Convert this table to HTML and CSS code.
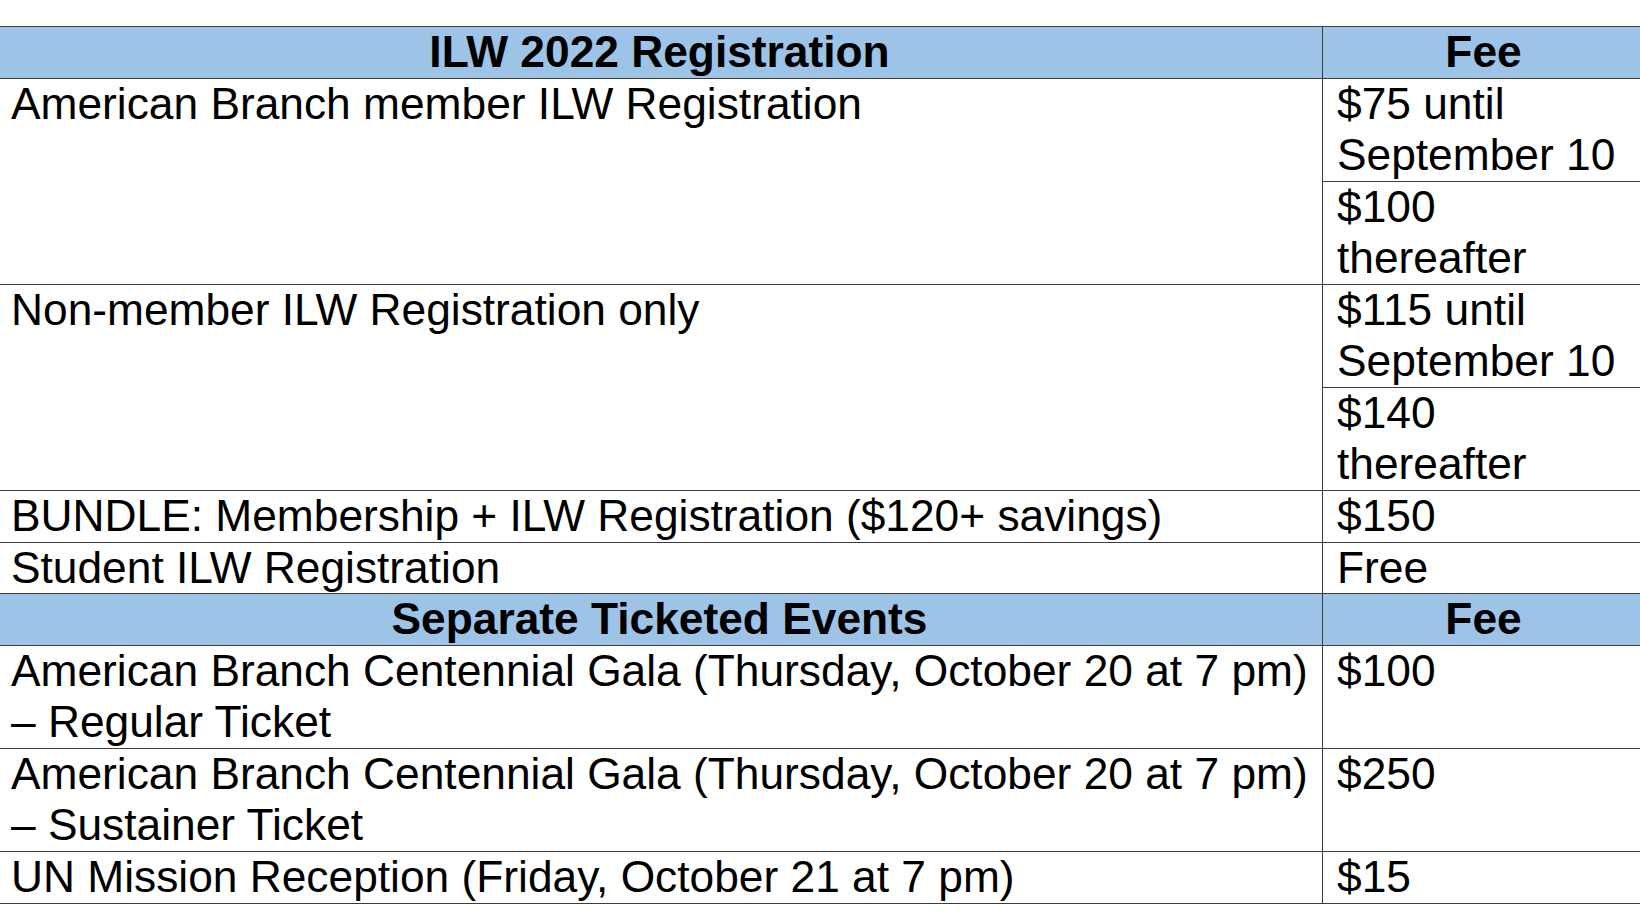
FILE: index.html
```html
<!DOCTYPE html>
<html lang="en">
<head>
<meta charset="utf-8">
<title>ILW 2022 Registration</title>
<link rel="stylesheet" href="styles.css">
</head>
<body>
<table class="fees">
  <colgroup>
    <col class="col-item">
    <col class="col-fee">
  </colgroup>
  <tr class="head">
    <th>ILW 2022 Registration</th>
    <th>Fee</th>
  </tr>
  <tr>
    <td rowspan="2">American Branch member ILW Registration</td>
    <td>$75 until September 10</td>
  </tr>
  <tr>
    <td>$100 thereafter</td>
  </tr>
  <tr>
    <td rowspan="2">Non-member ILW Registration only</td>
    <td>$115 until September 10</td>
  </tr>
  <tr>
    <td>$140 thereafter</td>
  </tr>
  <tr>
    <td>BUNDLE: Membership + ILW Registration ($120+ savings)</td>
    <td>$150</td>
  </tr>
  <tr>
    <td>Student ILW Registration</td>
    <td>Free</td>
  </tr>
  <tr class="head">
    <th>Separate Ticketed Events</th>
    <th>Fee</th>
  </tr>
  <tr>
    <td>American Branch Centennial Gala (Thursday, October 20 at 7 pm) – Regular Ticket</td>
    <td>$100</td>
  </tr>
  <tr>
    <td>American Branch Centennial Gala (Thursday, October 20 at 7 pm) – Sustainer Ticket</td>
    <td>$250</td>
  </tr>
  <tr>
    <td>UN Mission Reception (Friday, October 21 at 7 pm)</td>
    <td>$15</td>
  </tr>
</table>
</body>
</html>
```
FILE: styles.css
```css
html, body {
  margin: 0;
  background: #ffffff;
  overflow: hidden;
}

body {
  padding-top: 26px;
  font-family: "Liberation Sans", Arial, sans-serif;
  font-size: 44.3px;
  line-height: 50.95px;
  color: #000000;
}

.fees {
  border-collapse: collapse;
  table-layout: fixed;
  width: 1648px;
  margin-left: -4px;
}

.col-item {
  width: 1326px;
}

.col-fee {
  width: 322px;
}

.fees th,
.fees td {
  border: 1px solid #3c3c3c;
  padding: 0 14px;
  vertical-align: top;
  text-align: left;
  font-weight: normal;
}

.fees .head th {
  background: #9dc3e6;
  font-weight: bold;
  text-align: center;
}
```
